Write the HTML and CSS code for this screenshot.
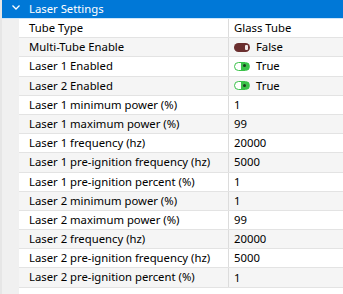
FILE: index.html
```html
<!DOCTYPE html>
<html lang="en">
    <head>
        <meta charset="UTF-8">
        <title>Laser Settings</title>
        <link rel="stylesheet" href="styles.css">
    </head>
    <body>
        <div class="panel">
            <div class="header">
                <span class="chevron">
                    <svg width="8" height="5" viewBox="0 0 8 5"><path d="M0.5 0.5 L4 4 L7.5 0.5" fill="none" stroke="#fff" stroke-width="1.3"/></svg>
                </span>
                <span class="title">Laser Settings</span>
            </div>
            <div class="body">
                <div class="gutter"></div>
                <div class="table">
                    <div class="row"><div class="label">Tube Type</div><div class="value">Glass Tube</div></div>
                    <div class="row"><div class="label">Multi-Tube Enable</div><div class="value"><span class="toggle off"><i></i></span>False</div></div>
                    <div class="row"><div class="label">Laser 1 Enabled</div><div class="value"><span class="toggle on"><i></i></span>True</div></div>
                    <div class="row"><div class="label">Laser 2 Enabled</div><div class="value"><span class="toggle on"><i></i></span>True</div></div>
                    <div class="row"><div class="label">Laser 1 minimum power (%)</div><div class="value">1</div></div>
                    <div class="row"><div class="label">Laser 1 maximum power (%)</div><div class="value">99</div></div>
                    <div class="row"><div class="label">Laser 1 frequency (hz)</div><div class="value">20000</div></div>
                    <div class="row"><div class="label">Laser 1 pre-ignition frequency (hz)</div><div class="value">5000</div></div>
                    <div class="row"><div class="label">Laser 1 pre-ignition percent (%)</div><div class="value">1</div></div>
                    <div class="row"><div class="label">Laser 2 minimum power (%)</div><div class="value">1</div></div>
                    <div class="row"><div class="label">Laser 2 maximum power (%)</div><div class="value">99</div></div>
                    <div class="row"><div class="label">Laser 2 frequency (hz)</div><div class="value">20000</div></div>
                    <div class="row"><div class="label">Laser 2 pre-ignition frequency (hz)</div><div class="value">5000</div></div>
                    <div class="row"><div class="label">Laser 2 pre-ignition percent (%)</div><div class="value">1</div></div>
                </div>
            </div>
        </div>
    </body>
</html>
```

FILE: styles.css
```css
body {
    margin: 0;
    font-family: 'Noto Sans', 'Open Sans', Arial, sans-serif;
    font-size: 11.3px;
    color: #000;
    background: #fff;
}
.panel {
    width: 343px;
    height: 294px;
    border-left: 2px solid #e6e6e6;
    box-sizing: border-box;
    display: flex;
    flex-direction: column;
}
.header {
    height: 18px;
    background: #0078d7;
    color: #fff;
    display: flex;
    align-items: center;
    border-bottom: 1px solid #cde6fa;
}
.chevron {
    width: 27px;
    display: flex;
    justify-content: center;
    margin-top: -3px;
}
.title {
    line-height: 18px;
}
.body {
    flex: 1;
    display: flex;
}
.gutter {
    width: 17px;
    background: #f0f0f0;
}
.table {
    flex: 1;
    display: flex;
    flex-direction: column;
}
.row {
    display: grid;
    grid-template-columns: 210px 1fr;
    height: 19.2px;
    box-sizing: border-box;
    border-bottom: 1px solid #e3e3e3;
    background: #fff;
}
.row:nth-child(even) {
    background: #f5f5f5;
}
.label {
    padding-left: 10px;
    line-height: 18px;
    white-space: nowrap;
    overflow: hidden;
    border-right: 1px solid #dcdcdc;
}
.value {
    padding-left: 5px;
    line-height: 18px;
    display: flex;
    align-items: center;
    white-space: nowrap;
}
.toggle {
    width: 16px;
    height: 9px;
    border-radius: 5px;
    box-sizing: border-box;
    margin-right: 6px;
    position: relative;
}
.toggle.off {
    background: #6b2f2f;
}
.toggle.off i {
    position: absolute;
    right: 2px;
    top: 2px;
    width: 3px;
    height: 5px;
    background: #f4eaea;
    border-radius: 1px;
}
.toggle.on {
    border: 1.5px solid #3bc24a;
    background: linear-gradient(to right, #fff 45%, #3bc24a 45%);
}
.toggle.on i {
    position: absolute;
    right: 3px;
    top: 1.5px;
    width: 3px;
    height: 3px;
    border-radius: 50%;
    background: #1b3d1f;
}
```
